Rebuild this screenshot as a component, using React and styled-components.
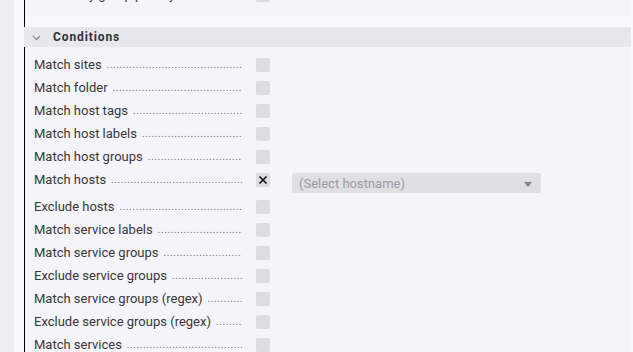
import React from 'react';
import styled, { createGlobalStyle } from 'styled-components';

const GlobalStyle = createGlobalStyle`
  html, body { margin: 0; padding: 0; }
  body {
    font-family: Roboto, "Liberation Sans", Arial, sans-serif;
    background: #ededf3;
    overflow: hidden;
  }
`;

const rows = [
  { label: 'Match sites' },
  { label: 'Match folder' },
  { label: 'Match host tags' },
  { label: 'Match host labels' },
  { label: 'Match host groups' },
  { label: 'Match hosts', checked: true, select: '(Select hostname)' },
  { label: 'Exclude hosts' },
  { label: 'Match service labels' },
  { label: 'Match service groups' },
  { label: 'Exclude service groups' },
  { label: 'Match service groups (regex)' },
  { label: 'Exclude service groups (regex)' },
  { label: 'Match services' },
];

const DOTS = '.'.repeat(120);

const App = () => {
  return (
    <>
      <GlobalStyle />
      <Page>
        <Main>
          <PrevBody>
            <Row>
              <Label>
                <span>Restrict by group priority</span>
                <Dots>{DOTS}</Dots>
              </Label>
              <Check />
            </Row>
          </PrevBody>
          <Spacer />
          <Header>
            <svg width="9" height="6" viewBox="0 0 9 6">
              <polyline points="1,1 4.5,4.5 8,1" fill="none" stroke="#8a8a90" strokeWidth="1.3" />
            </svg>
            <HeaderTitle>Conditions</HeaderTitle>
          </Header>
          <Body>
            {rows.map((r) => (
              <Row key={r.label}>
                <Label>
                  <span>{r.label}</span>
                  <Dots>{DOTS}</Dots>
                </Label>
                <Check>
                  {r.checked && (
                    <svg width="10" height="10" viewBox="0 0 10 10">
                      <path d="M1.5 1.5 L8.5 8.5 M8.5 1.5 L1.5 8.5" stroke="#1a1a1a" strokeWidth="1.7" />
                    </svg>
                  )}
                </Check>
                {r.select && (
                  <Select>
                    <span>{r.select}</span>
                    <Arrow />
                  </Select>
                )}
              </Row>
            ))}
          </Body>
        </Main>
      </Page>
    </>
  );
};

export default App;

const Page = styled.div`
  display: flex;
  height: 352px;
  padding-left: 14px;
  background: #ededf3;
`;

const Main = styled.div`
  flex: 1;
  display: flex;
  flex-direction: column;
  padding: 0 2px 0 10px;
  background: #f8f8fd;
  overflow: hidden;
`;

const PrevBody = styled.div`
  flex-shrink: 0;
  height: 16px;
  border-left: 1px solid #000;
  background: #f4f4f9;
  padding-left: 9px;
  overflow: hidden;
  & > div {
    margin-top: -16px;
  }
`;

const Spacer = styled.div`
  flex-shrink: 0;
  height: 11px;
  border-left: 1px solid #000;
`;

const Header = styled.div`
  flex-shrink: 0;
  height: 20px;
  display: flex;
  align-items: center;
  padding-left: 8px;
  background: #e8e7ee;
  svg {
    margin-top: 1px;
  }
`;

const HeaderTitle = styled.span`
  margin-left: 12px;
  font-size: 12px;
  font-weight: 700;
  letter-spacing: 0.9px;
  color: #323232;
`;

const Body = styled.div`
  flex: 1;
  min-height: 0;
  overflow: hidden;
  border-left: 1px solid #000;
  background: #f4f4fa;
  padding: 7px 0 0 9px;
`;

const Row = styled.div`
  display: flex;
  align-items: flex-start;
  padding: 4px 0 3px;
  min-height: 16px;
  flex-shrink: 0;
`;

const Label = styled.div`
  width: 208px;
  display: flex;
  font-size: 13px;
  line-height: 14px;
  color: #38383c;
  white-space: nowrap;
  overflow: hidden;
  span:first-child {
    flex-shrink: 0;
    padding-right: 5px;
  }
`;

const Dots = styled.span`
  flex: 1;
  overflow: hidden;
  color: #6a6a72;
  font-size: 10px;
  letter-spacing: 0.6px;
`;

const Check = styled.div`
  width: 14px;
  height: 14px;
  margin-left: 14px;
  border-radius: 2px;
  background: #dcdce1;
  display: flex;
  align-items: center;
  justify-content: center;
  flex-shrink: 0;
`;

const Select = styled.div`
  width: 249px;
  height: 20px;
  margin-left: 22px;
  border-radius: 3px;
  background: #dfdfe4;
  display: flex;
  align-items: center;
  justify-content: space-between;
  padding: 0 9px 0 7px;
  box-sizing: border-box;
  font-size: 13px;
  color: #9b9ba0;
`;

const Arrow = styled.span`
  width: 0;
  height: 0;
  margin-top: 3px;
  border-left: 4px solid transparent;
  border-right: 4px solid transparent;
  border-top: 5px solid #828288;
`;
